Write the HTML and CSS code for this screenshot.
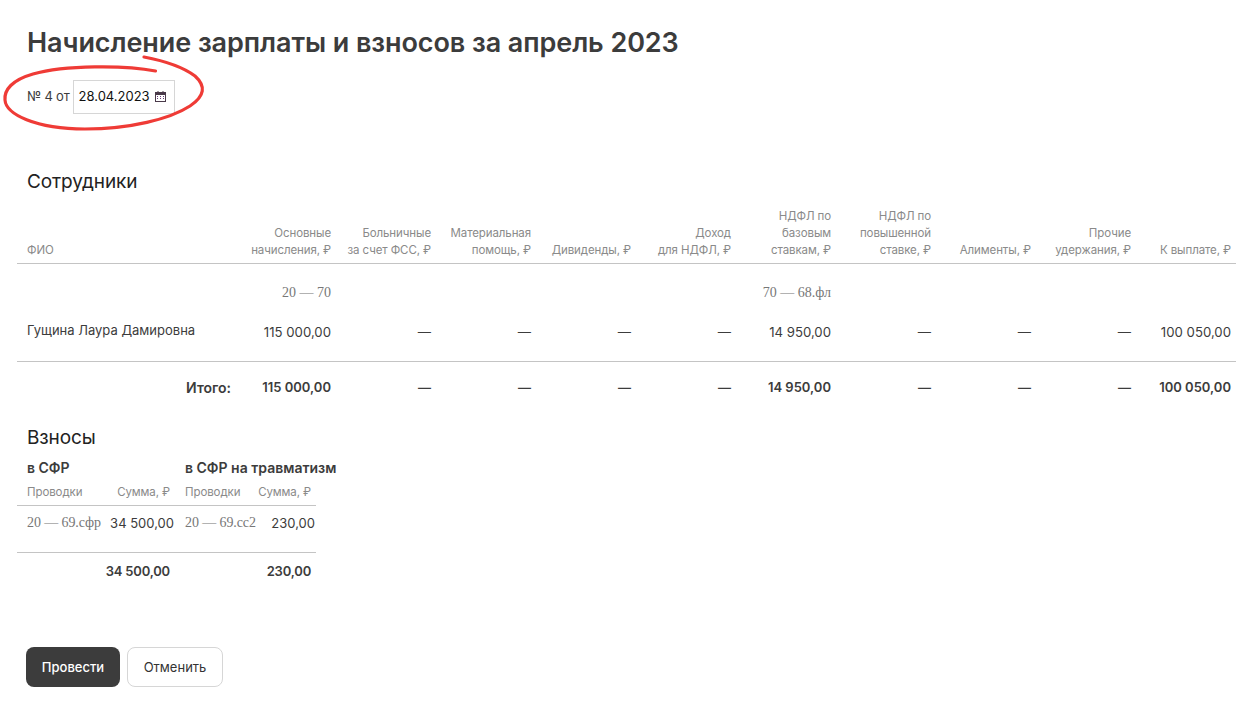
FILE: index.html
```html
<!DOCTYPE html>
<html>
  <head>
    <meta charset="utf-8" />
    <title>Начисление зарплаты и взносов</title>
    <link rel="stylesheet" href="styles.css">
  </head>
  <body>
    <h1>Начисление зарплаты и взносов за апрель 2023</h1>

    <div class="doc-line">
      <svg class="scribble" width="210" height="90" viewBox="0 50 210 90" fill="none">
        <path d="M155.5 71 C125 65 65 65 33 74 C12 80 4 90 5 100 C6 114 35 129 85 129 C130 129 170 119 190 106 C205 96 206 86 195 76 C183 67 165 61 144 57" stroke="#ef3b36" stroke-width="3.2" stroke-linecap="round"/>
      </svg>
      <span class="doc-number">№ 4 от</span>
      <div class="date-input">
        <span>28.04.2023</span>
        <svg width="11" height="11" viewBox="0 0 11 11">
          <rect x="0.5" y="1.5" width="10" height="9" fill="none" stroke="#4a3a4a"/>
          <rect x="0.5" y="1.5" width="10" height="2.5" fill="#4a3a4a"/>
          <rect x="2.5" y="0" width="1" height="2" fill="#4a3a4a"/>
          <rect x="7.5" y="0" width="1" height="2" fill="#4a3a4a"/>
          <path d="M2 5.5h1M5 5.5h1M8 5.5h1M2 7.5h1M5 7.5h1M8 7.5h1" stroke="#6a3a7a"/>
        </svg>
      </div>
    </div>

    <h2 class="staff-title">Сотрудники</h2>
    <table class="staff">
      <colgroup>
        <col class="col-name">
      </colgroup>
      <thead>
        <tr>
          <th class="name-head">ФИО</th>
          <th>Основные<br>начисления, ₽</th>
          <th>Больничные<br>за счет ФСС, ₽</th>
          <th>Материальная<br>помощь, ₽</th>
          <th>Дивиденды, ₽</th>
          <th>Доход<br>для НДФЛ, ₽</th>
          <th>НДФЛ по<br>базовым<br>ставкам, ₽</th>
          <th>НДФЛ по<br>повышенной<br>ставке, ₽</th>
          <th>Алименты, ₽</th>
          <th>Прочие<br>удержания, ₽</th>
          <th>К выплате, ₽</th>
        </tr>
      </thead>
      <tbody>
        <tr class="account-row">
          <td></td>
          <td class="account">20 — 70</td>
          <td></td><td></td><td></td><td></td>
          <td class="account">70 — 68.фл</td>
          <td></td><td></td><td></td><td></td>
        </tr>
        <tr class="value-row">
          <td class="name">Гущина Лаура Дамировна</td>
          <td>115 000,00</td>
          <td>—</td><td>—</td><td>—</td><td>—</td>
          <td>14 950,00</td>
          <td>—</td><td>—</td><td>—</td>
          <td>100 050,00</td>
        </tr>
      </tbody>
      <tfoot>
        <tr>
          <td class="total-label">Итого:</td>
          <td>115 000,00</td>
          <td>—</td><td>—</td><td>—</td><td>—</td>
          <td>14 950,00</td>
          <td>—</td><td>—</td><td>—</td>
          <td>100 050,00</td>
        </tr>
      </tfoot>
    </table>

    <h2 class="fees-title">Взносы</h2>
    <table class="fees">
      <colgroup>
        <col class="fee-account">
        <col class="fee-sum">
        <col class="fee-account2">
        <col class="fee-sum2">
      </colgroup>
      <thead>
        <tr class="group-row">
          <th colspan="2">в СФР</th>
          <th colspan="2">в СФР на травматизм</th>
        </tr>
        <tr class="head-row">
          <th>Проводки</th>
          <th class="right">Сумма, ₽</th>
          <th>Проводки</th>
          <th class="right">Сумма, ₽</th>
        </tr>
      </thead>
      <tbody>
        <tr>
          <td class="account">20 — 69.сфр</td>
          <td class="sum">34 500,00</td>
          <td class="account">20 — 69.сс2</td>
          <td class="sum">230,00</td>
        </tr>
      </tbody>
      <tfoot>
        <tr>
          <td></td>
          <td>34 500,00</td>
          <td></td>
          <td>230,00</td>
        </tr>
      </tfoot>
    </table>

    <div class="buttons-container">
      <button class="button-primary">Провести</button>
      <button class="button-plain">Отменить</button>
    </div>
  </body>
</html>
```

FILE: styles.css
```css
body {
  margin: 0;
  padding: 0 24px 0 17px;
  font-family: Inter, "Noto Sans", Arial, sans-serif;
  font-size: 13px;
  color: #3c3c3c;
  background: #fff;
}
h1 {
  font-size: 27px;
  line-height: 34px;
  font-weight: 600;
  margin: 0;
  padding: 26px 0 0 10px;
  letter-spacing: -0.08px;
}
h2 {
  font-size: 19px;
  font-weight: 400;
  line-height: 24px;
  margin: 0;
  color: #222;
  padding-left: 10px;
  letter-spacing: -0.1px;
}
.doc-line {
  position: relative;
  display: flex;
  align-items: center;
  gap: 3px;
  margin-top: 20px;
  padding-left: 10px;
  height: 34px;
}
.doc-number {
  letter-spacing: -0.2px;
  padding-bottom: 2px;
}
.scribble {
  position: absolute;
  left: -17px;
  top: -30px;
}
.date-input {
  display: flex;
  align-items: center;
  gap: 5px;
  height: 32px;
  padding: 0 8px 2px 5px;
  box-sizing: content-box;
  height: 30px;
  border: 1px solid #d6d6d6;
  color: #111;
}
.staff-title {
  margin-top: 56px;
}
table {
  border-collapse: collapse;
  table-layout: fixed;
}
.staff {
  width: 1219px;
  margin-top: 14px;
}
.col-name {
  width: 219px;
}
.staff th {
  font-size: 11.5px;
  line-height: 17px;
  font-weight: 400;
  letter-spacing: -0.1px;
  color: #8a8a8a;
  text-align: right;
  vertical-align: bottom;
  padding: 0 5px 4px 0;
  border-bottom: 1px solid #c4c4c4;
  white-space: nowrap;
}
.staff .name-head {
  text-align: left;
  padding-left: 10px;
}
.staff td {
  text-align: right;
  padding: 0 5px 0 0;
  white-space: nowrap;
}
.account {
  font-family: "Liberation Serif", Georgia, serif;
  font-size: 14px;
  color: #777;
  font-variant-numeric: oldstyle-nums;
}
.account-row td {
  height: 58px;
}
.value-row td {
  height: 37px;
  vertical-align: top;
  padding-top: 2px;
  font-size: 13.2px;
}
.staff .name {
  text-align: left;
  padding-left: 10px;
  padding-top: 0;
  font-size: 13px;
}
.staff tfoot td {
  height: 50px;
  font-weight: 600;
  border-top: 1px solid #c4c4c4;
}
.staff .total-label {
  font-size: 14px;
}
.fees-title {
  margin-top: 14px;
}
.fees {
  width: 299px;
  margin-top: 5px;
}
.fee-account {
  width: 80px;
}
.fee-sum {
  width: 78px;
}
.fee-account2 {
  width: 70px;
}
.fee-sum2 {
  width: 71px;
}
.fees th {
  text-align: left;
  padding: 0 0 0 10px;
  white-space: nowrap;
}
.group-row th {
  font-size: 14px;
  font-weight: 600;
  height: 24px;
}
.head-row th {
  font-size: 11.5px;
  font-weight: 400;
  letter-spacing: -0.1px;
  color: #8a8a8a;
  height: 26px;
  border-bottom: 1px solid #c4c4c4;
}
.fees .right {
  text-align: right;
  padding: 0 5px 0 0;
}
.fees tbody td {
  height: 47px;
  vertical-align: top;
  padding-top: 9px;
  white-space: nowrap;
  box-sizing: border-box;
}
.fees tbody .account {
  padding-left: 10px;
  letter-spacing: -0.1px;
}
.fees .sum {
  text-align: right;
}
.fees tfoot td {
  height: 33px;
  font-weight: 600;
  letter-spacing: -0.2px;
  text-align: right;
  padding-right: 5px;
  border-top: 1px solid #c4c4c4;
  white-space: nowrap;
}
.buttons-container {
  display: flex;
  gap: 7px;
  margin: 59px 0 0 9px;
}
button {
  height: 40px;
  border-radius: 8px;
  font-family: inherit;
  font-size: 13px;
  cursor: pointer;
}
.button-primary {
  width: 94px;
  background: #3c3c3c;
  border: none;
  color: #fff;
  font-weight: 500;
}
.button-plain {
  width: 96px;
  background: #fff;
  border: 1px solid #d6d6d6;
  color: #333;
}
```
